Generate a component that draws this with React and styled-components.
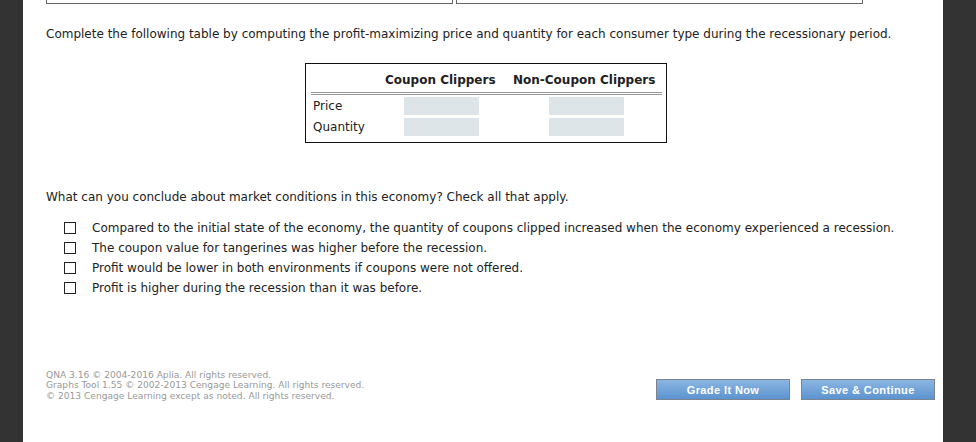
import React from 'react'
import styled, { createGlobalStyle } from 'styled-components'

const GlobalStyle = createGlobalStyle`
	html, body {
		margin: 0;
		padding: 0;
		background: #333;
	}
	body {
		font-family: "DejaVu Sans", Verdana, sans-serif;
		color: #222;
	}
`

const Page = styled.div`
	width: 920px;
	min-height: 442px;
	margin-left: 23px;
	background: #fff;
	padding: 0 0 0 23px;
	box-sizing: border-box;
	display: flex;
	flex-direction: column;
`

const TopBoxes = styled.div`
	display: flex;
	gap: 3px;
`

const TopBox = styled.div`
	width: 407px;
	height: 4px;
	box-sizing: border-box;
	border: 1px solid #666;
	border-top: none;
`

const Instruction = styled.p`
	margin: 23px 0 0;
	font-size: 12px;
	line-height: 15px;
`

const Table = styled.div`
	margin: 21px 0 0 259px;
	width: 362px;
	box-sizing: border-box;
	border: 1px solid #111;
	padding-bottom: 5px;
	display: grid;
	grid-template-columns: 79px 128px 1fr;
	font-size: 12px;
`

const HeadCell = styled.div`
	font-weight: bold;
	padding-top: 9px;
	height: 19px;
	line-height: 14px;
`

const Divider = styled.div`
	grid-column: 1 / -1;
	margin: 0 4px 0 5px;
	height: 0;
	border-top: 3px double #999;
`

const Label = styled.div`
	padding-left: 7px;
	height: 21px;
	display: flex;
	align-items: center;
`

const InputCell = styled.div`
	height: 21px;
	display: flex;
	align-items: center;
	padding-left: ${(p) => p.$offset}px;
`

const Field = styled.div`
	width: 75px;
	height: 18px;
	background: #dde5e8;
`

const Question = styled.p`
	margin: 47px 0 0;
	font-size: 12px;
	line-height: 15px;
`

const Options = styled.div`
	margin-top: 13px;
	display: flex;
	flex-direction: column;
`

const Option = styled.label`
	display: flex;
	align-items: center;
	height: 20px;
	padding-left: 18px;
	font-size: 12px;
`

const Box = styled.span`
	width: 12px;
	height: 12px;
	box-sizing: border-box;
	border: 1px solid #222;
	margin-right: 16px;
	flex-shrink: 0;
`

const Footer = styled.div`
	margin-top: auto;
	padding-bottom: 41px;
	display: flex;
	align-items: flex-end;
	justify-content: space-between;
	padding-right: 8px;
`

const Legal = styled.div`
	font-size: 9.1px;
	line-height: 10.5px;
	color: #999;
`

const Buttons = styled.div`
	display: flex;
	gap: 11px;
	margin-bottom: 1px;
`

const Button = styled.button`
	width: 134px;
	height: 21px;
	border: 1px solid #7b8591;
	background: linear-gradient(#8bb6e2, #5c93cf);
	color: #fff;
	font-family: "Liberation Sans", Arial, sans-serif;
	font-weight: bold;
	font-size: 11px;
	letter-spacing: 0.4px;
	padding: 0;
	cursor: pointer;
`

const options = [
	'Compared to the initial state of the economy, the quantity of coupons clipped increased when the economy experienced a recession.',
	'The coupon value for tangerines was higher before the recession.',
	'Profit would be lower in both environments if coupons were not offered.',
	'Profit is higher during the recession than it was before.',
]

function App() {
	return (
		<>
			<GlobalStyle />
			<Page>
				<TopBoxes>
					<TopBox />
					<TopBox />
				</TopBoxes>
				<Instruction>
					Complete the following table by computing the profit-maximizing price and quantity for each consumer type during the recessionary period.
				</Instruction>
				<Table>
					<HeadCell />
					<HeadCell>Coupon Clippers</HeadCell>
					<HeadCell>Non-Coupon Clippers</HeadCell>
					<Divider />
					<Label>Price</Label>
					<InputCell $offset={19}><Field /></InputCell>
					<InputCell $offset={36}><Field /></InputCell>
					<Label>Quantity</Label>
					<InputCell $offset={19}><Field /></InputCell>
					<InputCell $offset={36}><Field /></InputCell>
				</Table>
				<Question>What can you conclude about market conditions in this economy? Check all that apply.</Question>
				<Options>
					{options.map((text) => (
						<Option key={text}>
							<Box />
							{text}
						</Option>
					))}
				</Options>
				<Footer>
					<Legal>
						<div>QNA 3.16 © 2004-2016 Aplia. All rights reserved.</div>
						<div>Graphs Tool 1.55 © 2002-2013 Cengage Learning. All rights reserved.</div>
						<div>© 2013 Cengage Learning except as noted. All rights reserved.</div>
					</Legal>
					<Buttons>
						<Button>Grade It Now</Button>
						<Button>Save &amp; Continue</Button>
					</Buttons>
				</Footer>
			</Page>
		</>
	)
}

export default App
